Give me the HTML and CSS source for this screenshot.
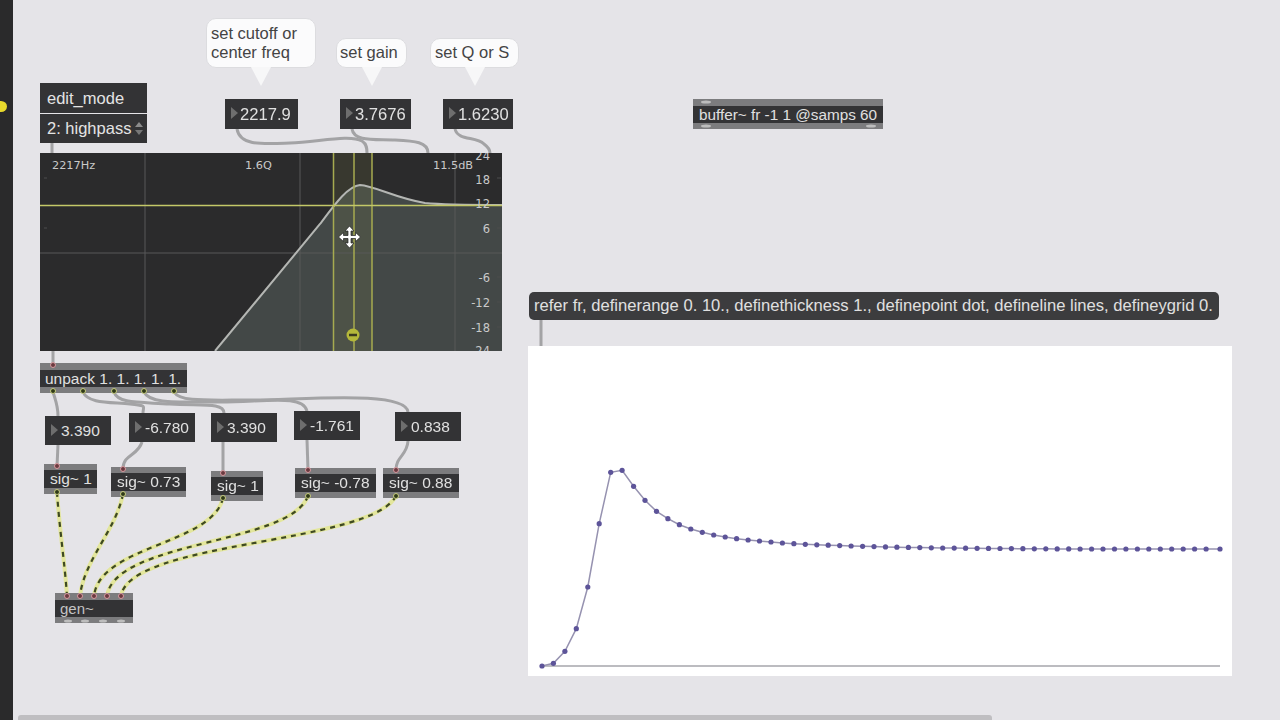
FILE: index.html
```html
<!DOCTYPE html>
<html lang="en">
<head>
    <meta charset="UTF-8">
    <title>Filter patch</title>
    <link rel="stylesheet" href="styles.css">
</head>
<body>
    <div class="patcher">
        <div class="sidebar"></div>
        <div class="led"></div>

        <!-- patch cords, under the objects -->
        <svg class="layer" width="1280" height="720">
            <defs>
                <path id="s1" d="M57 492C59 525 65 565 67 596"/>
                <path id="s2" d="M123 494C116 530 84 560 80 596"/>
                <path id="s3" d="M223 498C212 545 100 545 94 596"/>
                <path id="s4" d="M308 496C290 545 115 540 107 596"/>
                <path id="s5" d="M396 496C370 545 130 540 121 596"/>
            </defs>
            <g class="cord">
                <path d="M52 143V153"/>
                <path d="M237 129C240 146 262 144 290 143S350 134 362 141C367 144 367 149 367 153"/>
                <path d="M352 129C354 142 375 139 395 140S428 142 428 153"/>
                <path d="M455 129C458 141 476 136 484 144C488 147 490 150 490 153"/>
                <path d="M53 351V365"/>
                <path d="M541 320V346"/>
                <path d="M53 392C56 402 58 406 58 416"/>
                <path d="M83 392C88 404 112 402 130 404S143 406 143 413"/>
                <path d="M114 392C118 404 140 402 170 404S224 402 224 413"/>
                <path d="M144 392C150 404 175 402 220 402S303 394 307 411"/>
                <path d="M174 392C180 402 205 400 253 400S405 390 408 412"/>
                <path d="M58 445L57 466"/>
                <path d="M142 442C138 456 123 454 123 469"/>
                <path d="M223 442V473"/>
                <path d="M307 440L308 470"/>
                <path d="M408 441C407 456 396 456 396 470"/>
            </g>
            <g class="signal-base">
                <use href="#s1"/>
                <use href="#s2"/>
                <use href="#s3"/>
                <use href="#s4"/>
                <use href="#s5"/>
            </g>
            <g class="signal-dash">
                <use href="#s1"/>
                <use href="#s2"/>
                <use href="#s3"/>
                <use href="#s4"/>
                <use href="#s5"/>
            </g>
        </svg>

        <!-- comments -->
        <div class="bubble bubble-cutoff">set cutoff or<br>center freq</div>
        <div class="bubble bubble-gain">set gain</div>
        <div class="bubble bubble-q">set Q or S</div>

        <!-- mode menu -->
        <div class="mode">
            <div class="mode-label">edit_mode</div>
            <div class="mode-menu">2: highpass<span class="stepper"></span></div>
        </div>

        <!-- number boxes -->
        <div class="num num-cutoff">2217.9</div>
        <div class="num num-gain">3.7676</div>
        <div class="num num-q">1.6230</div>
        <div class="num small n1">3.390</div>
        <div class="num small n2">-6.780</div>
        <div class="num small n3">3.390</div>
        <div class="num small n4">-1.761</div>
        <div class="num small n5">0.838</div>

        <!-- filtergraph -->
        <svg class="filter" width="462" height="198" viewBox="40 153 462 198">
            <rect class="f-bg" x="40" y="153" width="462" height="198"/>
            <path class="f-fill" d="M215 351L320 224C335 204 348 186 360 185C375 186 395 198 425 203C445 205 480 205 502 205V351Z"/>
            <rect class="f-band" x="333" y="153" width="39" height="198"/>
            <path class="f-grid" d="M145 153V351M300 153V351M455 153V351M40 253H502"/>
            <path class="f-tick" d="M44 178H47M44 228H47M497 178H501M497 228H501M497 277H501M497 302H501M497 327H501"/>
            <path class="f-curve" d="M215 351L320 224C335 204 348 186 360 185C375 186 395 198 425 203C445 205 480 205 502 205"/>
            <path class="f-line" d="M333.500 153V351M372 153V351M354 153V351"/>
            <path class="f-level" d="M40 205.500H502"/>
            <circle class="f-handle" cx="353" cy="335" r="6.500"/>
            <path class="f-minus" d="M349 335H357"/>
            <g class="f-text">
                <text x="52" y="169">2217Hz</text>
                <text x="245" y="169">1.6Q</text>
                <text x="433" y="169">11.5dB</text>
            </g>
            <g class="f-scale">
                <text x="490" y="160">24</text>
                <text x="490" y="184">18</text>
                <text x="490" y="208">12</text>
                <text x="490" y="233">6</text>
                <text x="490" y="282">-6</text>
                <text x="490" y="307">-12</text>
                <text x="490" y="332">-18</text>
                <text x="490" y="355">-24</text>
            </g>
        </svg>

        <!-- objects -->
        <div class="obj unpack">unpack 1. 1. 1. 1. 1.</div>
        <div class="obj sig s-a">sig~ 1</div>
        <div class="obj sig s-b">sig~ 0.73</div>
        <div class="obj sig s-c">sig~ 1</div>
        <div class="obj sig s-d">sig~ -0.78</div>
        <div class="obj sig s-e">sig~ 0.88</div>
        <div class="obj gen">gen~</div>
        <div class="obj buffer">buffer~ fr -1 1 @samps 60</div>

        <div class="message">refer fr, definerange 0. 10., definethickness 1., definepoint dot, defineline lines, defineygrid 0.</div>

        <!-- plot of the buffer -->
        <svg class="plot" width="704" height="330" viewBox="528 346 704 330">
            <defs>
                <marker id="dot" markerUnits="userSpaceOnUse" markerWidth="8" markerHeight="8" refX="4" refY="4">
                    <circle cx="4" cy="4" r="2.6" fill="#5d5499"/>
                </marker>
            </defs>
            <path class="plot-axis" d="M541 666H1220"/>
            <polyline class="plot-line" points="542,666 553.4,663.3 564.9,651.3 576.3,628.7 587.8,587 599.2,523.7 610.7,472.3 622.1,470.3 633.6,486.3 645,500.3 656.5,511.3 667.9,518.7 679.4,524.7 690.8,529 702.3,532.3 713.7,535 725.2,537 736.6,538.7 748.1,540 759.5,541 771,542 782.4,543 793.9,543.7 805.3,544.3 816.8,544.8 828.2,545.2 839.7,545.6 851.1,546 862.6,546.3 874,546.6 885.5,546.9 896.9,547.2 908.4,547.4 919.8,547.6 931.3,547.8 942.7,548 954.2,548.1 965.6,548.2 977.1,548.3 988.5,548.4 1000,548.5 1011.4,548.6 1022.9,548.7 1034.3,548.8 1045.8,548.8 1057.2,548.9 1068.7,548.9 1080.1,549 1091.6,549 1103,549 1114.5,549 1125.9,549 1137.4,549 1148.8,549 1160.3,549 1171.7,549 1183.2,549 1194.6,549 1206.1,549 1220,549"/>
        </svg>

        <!-- inlets and outlets, over the objects -->
        <svg class="layer" width="1280" height="720">
            <g class="inlet">
                <circle cx="53" cy="365" r="2.500"/>
                <circle cx="57" cy="466" r="2.500"/>
                <circle cx="123" cy="469" r="2.500"/>
                <circle cx="223" cy="473" r="2.500"/>
                <circle cx="308" cy="470" r="2.500"/>
                <circle cx="396" cy="470" r="2.500"/>
                <circle cx="67" cy="596" r="2.500"/>
                <circle cx="80" cy="596" r="2.500"/>
                <circle cx="94" cy="596" r="2.500"/>
                <circle cx="107" cy="596" r="2.500"/>
                <circle cx="121" cy="596" r="2.500"/>
            </g>
            <g class="outlet">
                <circle cx="53" cy="391" r="2.500"/>
                <circle cx="83" cy="391" r="2.500"/>
                <circle cx="114" cy="391" r="2.500"/>
                <circle cx="144" cy="391" r="2.500"/>
                <circle cx="174" cy="391" r="2.500"/>
                <circle cx="57" cy="492" r="2.500"/>
                <circle cx="123" cy="494" r="2.500"/>
                <circle cx="223" cy="498" r="2.500"/>
                <circle cx="308" cy="496" r="2.500"/>
                <circle cx="396" cy="496" r="2.500"/>
            </g>
            <g class="gen-out">
                <ellipse cx="68" cy="621" rx="4" ry="1.500"/>
                <ellipse cx="85" cy="621" rx="4" ry="1.500"/>
                <ellipse cx="103" cy="621" rx="4" ry="1.500"/>
                <ellipse cx="121" cy="621" rx="4" ry="1.500"/>
                <ellipse cx="706" cy="102" rx="5" ry="1.500"/>
                <ellipse cx="706" cy="126" rx="5" ry="1.500"/>
                <ellipse cx="871" cy="126" rx="5" ry="1.500"/>
            </g>
            <path class="cursor" d="M349.500 226L354 231H351V235.500H355.500V232.500L360.500 237L355.500 241.500V238.500H351V243H354L349.500 248L345 243H348V238.500H343.500V241.500L338.500 237L343.500 232.500V235.500H348V231H345Z"/>
        </svg>

        <div class="scrollbar"></div>
    </div>
</body>
</html>
```

FILE: styles.css
```css
body {
    margin: 0;
    background-color: #e5e4e8;
    font-family: "Liberation Sans", Arial, sans-serif;
    overflow: hidden;
}
.patcher {
    position: relative;
    width: 1280px;
    height: 720px;
    overflow: hidden;
    filter: blur(0.5px);
}
.layer {
    position: absolute;
    left: 0;
    top: 0;
}
.sidebar {
    position: absolute;
    left: 0;
    top: 0;
    width: 13px;
    height: 720px;
    background-color: #2a2a2b;
}
.led {
    position: absolute;
    left: -5px;
    top: 101px;
    width: 12px;
    height: 11px;
    border-radius: 50%;
    background-color: #e8d92c;
}

/* patch cords */
.cord path {
    fill: none;
    stroke: #a3a3a5;
    stroke-width: 3;
}
.signal-base {
    fill: none;
    stroke: #e3e69c;
    stroke-width: 4;
}
.signal-dash {
    fill: none;
    stroke: #3f4a22;
    stroke-width: 2.2;
    stroke-dasharray: 5 5;
}

/* comments */
.bubble {
    position: absolute;
    box-sizing: border-box;
    height: 30px;
    padding: 4px 0 0 4px;
    background-color: #fbfbfc;
    border: 1px solid #dcdcdf;
    border-radius: 10px;
    color: #444;
    font-size: 16.5px;
    line-height: 19px;
}
.bubble::after {
    content: "";
    position: absolute;
    left: 50%;
    bottom: -19px;
    margin-left: -10px;
    border-top: 19px solid #f7f7f8;
    border-left: 10px solid transparent;
    border-right: 10px solid transparent;
}
.bubble-cutoff {
    left: 206px;
    top: 18px;
    width: 110px;
    height: 50px;
    padding-top: 5px;
}
.bubble-gain {
    left: 336px;
    top: 38px;
    width: 71px;
    padding-left: 3px;
}
.bubble-q {
    left: 430px;
    top: 38px;
    width: 89px;
}

/* mode menu */
.mode {
    position: absolute;
    left: 40px;
    top: 83px;
    width: 107px;
    color: #e4e4e4;
    font-size: 16.5px;
}
.mode-label,
.mode-menu {
    box-sizing: border-box;
    padding-left: 7px;
    background-color: #333335;
}
.mode-label {
    height: 30px;
    line-height: 31px;
    margin-bottom: 1px;
}
.mode-menu {
    position: relative;
    height: 29px;
    line-height: 29px;
}
.stepper {
    position: absolute;
    right: 4px;
    top: 8px;
    width: 0;
    height: 0;
    border-left: 4px solid transparent;
    border-right: 4px solid transparent;
    border-bottom: 5px solid #8b8b8b;
}
.stepper::after {
    content: "";
    position: absolute;
    left: -4px;
    top: 8px;
    border-left: 4px solid transparent;
    border-right: 4px solid transparent;
    border-top: 5px solid #777;
}

/* number boxes */
.num {
    position: absolute;
    box-sizing: border-box;
    height: 30px;
    padding-left: 15px;
    background-color: #333335;
    color: #e0e0e0;
    font-size: 16.6px;
    line-height: 32px;
}
.num::before {
    content: "";
    position: absolute;
    left: 6px;
    top: 8px;
    border-left: 7px solid #6e6e6e;
    border-top: 6.5px solid transparent;
    border-bottom: 6.5px solid transparent;
}
.num.small {
    width: 66px;
    height: 29px;
    font-size: 15.5px;
    padding-left: 16px;
    line-height: 30px;
}
.num-cutoff { left: 225px; top: 99px; width: 73px; }
.num-gain { left: 340px; top: 99px; width: 71px; }
.num-q { left: 443px; top: 99px; width: 70px; }
.n1 { left: 45px; top: 416px; }
.n2 { left: 129px; top: 413px; }
.n3 { left: 211px; top: 413px; }
.n4 { left: 294px; top: 411px; }
.n5 { left: 395px; top: 412px; }

/* filtergraph */
.filter {
    position: absolute;
    left: 40px;
    top: 153px;
}
.f-bg { fill: #2b2b2c; }
.f-fill { fill: #434847; }
.f-band { fill: #b8bd4a; fill-opacity: 0.09; }
.f-grid {
    fill: none;
    stroke: #585958;
    stroke-width: 1;
}
.f-tick {
    fill: none;
    stroke: #4c4c4c;
    stroke-width: 1;
}
.f-curve {
    fill: none;
    stroke: #b4b6b3;
    stroke-width: 2;
}
.f-line {
    fill: none;
    stroke: #a6ab50;
    stroke-width: 1.5;
}
.f-level {
    fill: none;
    stroke: #c3c868;
    stroke-width: 1.5;
}
.f-handle { fill: #b4b83a; }
.f-minus {
    stroke: #3a3a20;
    stroke-width: 2.5;
}
.f-text,
.f-scale {
    fill: #c9c9c9;
    font-family: "DejaVu Sans", sans-serif;
    font-size: 11.3px;
}
.f-scale {
    font-size: 11.5px;
    text-anchor: end;
}

/* objects */
.obj {
    position: absolute;
    box-sizing: border-box;
    padding-left: 5px;
    background-color: #333335;
    border-top: 6px solid #7c7c7e;
    border-bottom: 6px solid #7c7c7e;
    color: #e0e0e0;
    font-size: 15.5px;
    line-height: 17px;
    white-space: nowrap;
}
.unpack { left: 40px; top: 363px; width: 147px; height: 30px; border-top-width: 7px; }
.sig { height: 30px; padding-left: 6px; }
.s-a { left: 44px; top: 464px; width: 53px; }
.s-b { left: 111px; top: 467px; width: 75px; }
.s-c { left: 211px; top: 471px; width: 52px; }
.s-d { left: 295px; top: 468px; width: 81px; }
.s-e { left: 383px; top: 468px; width: 76px; }
.gen {
    left: 55px;
    top: 593px;
    width: 78px;
    height: 30px;
    border-top-width: 7px;
    color: #c4c4c4;
    font-size: 15px;
}
.buffer {
    left: 693px;
    top: 99px;
    width: 190px;
    height: 30px;
    padding-left: 6px;
    border-top-width: 7px;
    font-size: 15.3px;
}

/* message box */
.message {
    position: absolute;
    left: 529px;
    top: 292px;
    width: 690px;
    height: 28px;
    box-sizing: border-box;
    padding-left: 5px;
    background-color: #3c3c3e;
    border-radius: 5px;
    color: #e0e0e0;
    font-size: 16.6px;
    line-height: 28px;
    white-space: nowrap;
}

/* plot */
.plot {
    position: absolute;
    left: 528px;
    top: 346px;
    background-color: #fff;
}
.plot-axis {
    stroke: #bcbcc0;
    stroke-width: 2;
}
.plot-line {
    fill: none;
    stroke: #9692b0;
    stroke-width: 1.5;
    marker-start: url(#dot);
    marker-mid: url(#dot);
    marker-end: url(#dot);
}

/* ports */
.inlet circle {
    fill: #6b3a40;
    stroke: #d79aa0;
    stroke-width: 1;
}
.outlet circle {
    fill: #2f3a18;
    stroke: #c9cd80;
    stroke-width: 1;
}
.gen-out ellipse { fill: #bdbdbd; }
.cursor {
    fill: #fff;
    stroke: #222;
    stroke-width: 0.7;
}

.scrollbar {
    position: absolute;
    left: 18px;
    top: 715px;
    width: 974px;
    height: 5px;
    border-radius: 3px 3px 0 0;
    background-color: #bfbec1;
}
```
